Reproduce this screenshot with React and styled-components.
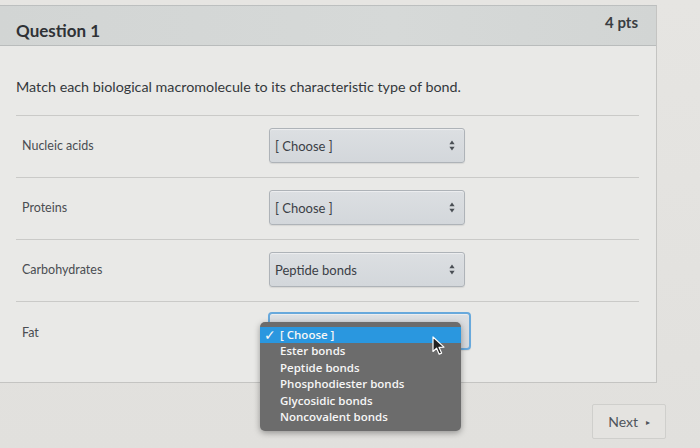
import React from "react";
import styled, { createGlobalStyle } from "styled-components";

const rows = [
  { label: "Nucleic acids", value: "[ Choose ]" },
  { label: "Proteins", value: "[ Choose ]" },
  { label: "Carbohydrates", value: "Peptide bonds" },
  { label: "Fat", value: "", open: true },
];

const options = [
  "[ Choose ]",
  "Ester bonds",
  "Peptide bonds",
  "Phosphodiester bonds",
  "Glycosidic bonds",
  "Noncovalent bonds",
];

function Arrows() {
  return (
    <svg width="6" height="11" viewBox="0 0 6 11">
      <path d="M3 0.5 L5.6 4.2 H0.4 Z" fill="#4a4f55" />
      <path d="M3 10.5 L5.6 6.8 H0.4 Z" fill="#4a4f55" />
    </svg>
  );
}

function Cursor() {
  return (
    <Pointer width="14" height="20" viewBox="0 0 14 20">
      <path
        d="M1 1 L1 15.5 L4.6 12.2 L7.2 18.2 L9.6 17.1 L7 11.3 L12 11.1 Z"
        fill="#222"
        stroke="#fff"
        strokeWidth="1.2"
        strokeLinejoin="round"
      />
    </Pointer>
  );
}

function App() {
  return (
    <>
      <GlobalStyle />
      <Page>
        <Card>
          <Header>
            <Title>Question 1</Title>
            <Points>4 pts</Points>
          </Header>
          <Body>
            <Prompt>Match each biological macromolecule to its characteristic type of bond.</Prompt>
            {rows.map((row) => (
              <Row key={row.label}>
                <Label>{row.label}</Label>
                <SelectWrap>
                  <Select $focused={row.open}>
                    <span>{row.value}</span>
                    <Arrows />
                  </Select>
                  {row.open && (
                    <Menu>
                      {options.map((opt, i) => (
                        <Option key={opt} $active={i === 0}>
                          {i === 0 && <Check>✓</Check>}
                          {opt}
                        </Option>
                      ))}
                    </Menu>
                  )}
                  {row.open && <Cursor />}
                </SelectWrap>
              </Row>
            ))}
          </Body>
        </Card>
        <Footer>
          <NextButton>
            Next <small>▸</small>
          </NextButton>
        </Footer>
      </Page>
    </>
  );
}

const GlobalStyle = createGlobalStyle`
  html, body {
    margin: 0;
    background: #e2e1de;
  }
  body {
    font-family: Lato, "Liberation Sans", sans-serif;
    color: #2d3b45;
    overflow: hidden;
  }
`;

const Page = styled.div`
  width: 700px;
  height: 448px;
  padding-top: 5px;
  box-sizing: border-box;
  background: linear-gradient(180deg, #e6e5e2 0%, #e1e0dd 100%);
`;

const Card = styled.div`
  width: 657px;
  box-sizing: border-box;
  border-top: 1px solid #bcbfbf;
  border-right: 1px solid #c4c4c2;
  border-bottom: 1px solid #c4c4c2;
  background: #e9e9e7;
`;

const Header = styled.div`
  height: 40px;
  box-sizing: border-box;
  display: flex;
  justify-content: space-between;
  align-items: flex-start;
  padding: 0 18px 0 16px;
  background: linear-gradient(90deg, #d2d5d4 0%, #d6d9d8 60%, #d2d5d4 100%);
  border-bottom: 1px solid #b9bcbc;
`;

const Title = styled.h2`
  margin: 15px 0 0;
  font-size: 17px;
  line-height: 20px;
  font-weight: 700;
  color: #2f3236;
`;

const Points = styled.div`
  margin-top: 7px;
  font-size: 15px;
  line-height: 18px;
  font-weight: 700;
  color: #3a3d41;
`;

const Body = styled.div`
  padding: 0 17px 32px 16px;
`;

const Prompt = styled.p`
  margin: 31px 0 18px;
  font-size: 14.3px;
  line-height: 20px;
  color: #34383c;
`;

const Row = styled.div`
  display: grid;
  grid-template-columns: 247px 196px;
  align-items: center;
  padding: 12px 6px 14px;
  border-top: 1px solid #cacac8;
  &:last-child {
    padding-bottom: 0;
  }
`;

const Label = styled.div`
  font-size: 12.5px;
  color: #4a4d52;
`;

const SelectWrap = styled.div`
  position: relative;
`;

const Select = styled.div`
  height: 35px;
  box-sizing: border-box;
  display: flex;
  align-items: center;
  justify-content: space-between;
  padding: 0 9px 0 5px;
  font-size: 13px;
  color: #3b4046;
  background: linear-gradient(180deg, #dcdfe2 0%, #d3d7db 100%);
  border: 1px solid #aeb3b8;
  border-radius: 3px;
  box-shadow: inset 0 1px 1px rgba(255, 255, 255, 0.5), 0 1px 1px rgba(0, 0, 0, 0.08);
  ${(p) =>
    p.$focused &&
    `
    width: 203px;
    margin: -2px 0 0 -1px;
    height: 38px;
    border: 2px solid #68a9dc;
    border-radius: 4px;
  `}
`;

const Menu = styled.div`
  position: absolute;
  top: 8px;
  left: -9px;
  width: 201px;
  box-sizing: border-box;
  padding: 5px 0 6px;
  background: #6c6c6c;
  border-radius: 5px;
  box-shadow: 0 2px 6px rgba(0, 0, 0, 0.35);
  font-family: "Open Sans", "DejaVu Sans", sans-serif;
  font-weight: 600;
  font-size: 11.5px;
  color: #f6f6f6;
  z-index: 2;
`;

const Option = styled.div`
  position: relative;
  height: 16.4px;
  line-height: 16.4px;
  padding-left: 20px;
  white-space: nowrap;
  background: ${(p) => (p.$active ? "#2a97df" : "transparent")};
`;

const Check = styled.span`
  position: absolute;
  left: 4px;
  font-size: 14px;
  font-weight: 700;
`;

const Pointer = styled.svg`
  position: absolute;
  left: 163px;
  top: 22px;
  z-index: 3;
`;

const Footer = styled.div`
  width: 666px;
  display: flex;
  justify-content: flex-end;
  margin-top: 21px;
`;

const NextButton = styled.button`
  width: 74px;
  height: 35px;
  font-family: Lato, "Liberation Sans", sans-serif;
  font-size: 14px;
  color: #4f555b;
  background: #e4e3e0;
  border: 1px solid #cfcfcc;
  border-radius: 2px;
  small {
    font-size: 8px;
    margin-left: 4px;
    vertical-align: 2px;
  }
`;

export default App;
